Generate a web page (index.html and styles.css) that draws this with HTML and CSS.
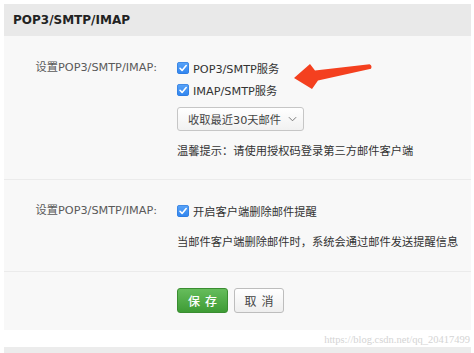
FILE: index.html
```html
<!DOCTYPE html>
<html lang="zh-CN">
<head>
<meta charset="utf-8">
<title>POP3/SMTP/IMAP</title>
<link rel="stylesheet" href="styles.css">
</head>
<body>
<div class="page">
  <div class="card">
    <div class="card-head">POP3/SMTP/IMAP</div>
    <div class="section sec1">
      <div class="label">设置POP3/SMTP/IMAP:</div>
      <div class="content">
        <label class="check"><span class="box"><svg viewBox="0 0 12 12" width="12" height="12"><path d="M3 6.3 L5.1 8.4 L9.2 3.6" fill="none" stroke="#fff" stroke-width="1.6" stroke-linecap="round" stroke-linejoin="round"/></svg></span>POP3/SMTP服务</label>
        <label class="check"><span class="box"><svg viewBox="0 0 12 12" width="12" height="12"><path d="M3 6.3 L5.1 8.4 L9.2 3.6" fill="none" stroke="#fff" stroke-width="1.6" stroke-linecap="round" stroke-linejoin="round"/></svg></span>IMAP/SMTP服务</label>
        <div class="select"><span>收取最近30天邮件</span><svg class="chev" viewBox="0 0 10 6" width="9" height="6"><path d="M1 1 L5 5 L9 1" fill="none" stroke="#777" stroke-width="1.1"/></svg></div>
        <div class="hint">温馨提示：请使用授权码登录第三方邮件客户端</div>
      </div>
    </div>
    <div class="section sec2">
      <div class="label">设置POP3/SMTP/IMAP:</div>
      <div class="content">
        <label class="check"><span class="box"><svg viewBox="0 0 12 12" width="12" height="12"><path d="M3 6.3 L5.1 8.4 L9.2 3.6" fill="none" stroke="#fff" stroke-width="1.6" stroke-linecap="round" stroke-linejoin="round"/></svg></span>开启客户端删除邮件提醒</label>
        <div class="hint">当邮件客户端删除邮件时，系统会通过邮件发送提醒信息</div>
      </div>
    </div>
    <div class="section sec3">
      <div class="label"></div>
      <div class="actions">
        <button class="btn btn-save">保存</button>
        <button class="btn btn-cancel">取消</button>
      </div>
    </div>
  </div>
  <div class="next-card"></div>
  <svg class="arrow" viewBox="0 0 474 353" width="474" height="353">
    <path d="M294 78 L310 64 L315 70.5 L369.5 64.2 Q372.5 65.5 371 68.8 L318 80.5 L312 89 Z" fill="#f4401f"/>
  </svg>
  <div class="watermark">https://blog.csdn.net/qq_20417499</div>
</div>
</body>
</html>
```
FILE: styles.css
```css
html, body {
  margin: 0;
  padding: 0;
  background: #fff;
}
body {
  font-family: "DejaVu Sans", "Noto Sans CJK SC", sans-serif;
  font-size: 11.25px;
  color: #333;
}
.page {
  position: relative;
  width: 474px;
  height: 353px;
  overflow: hidden;
  padding: 4px 3px 0 4px;
  box-sizing: border-box;
}
.card {
  background: #f8f8f8;
}
.card-head {
  height: 32px;
  line-height: 32px;
  background: #e9e9e9;
  padding-left: 9px;
  font-weight: bold;
  font-size: 12px;
  color: #222;
}
.section {
  display: grid;
  grid-template-columns: 153px 1fr;
  column-gap: 20px;
}
.sec1 {
  padding: 21px 0 16px;
}
.sec2 {
  padding: 20px 0 17px;
  border-top: 1px solid #ebebeb;
}
.sec3 {
  padding: 16px 0 17px;
  border-top: 1px solid #ebebeb;
}
.label {
  text-align: right;
  line-height: 22px;
  color: #5a5a5a;
}
.content {
  display: flex;
  flex-direction: column;
  align-items: flex-start;
}
.check {
  display: flex;
  align-items: center;
  gap: 4px;
  height: 22px;
  color: #333;
}
.box {
  width: 12px;
  height: 12px;
  border-radius: 3px;
  background: linear-gradient(#5aa4f8, #2f84ef);
  box-shadow: inset 0 0 0 0.5px #2a75d6;
  display: flex;
}
.select {
  margin-top: 6px;
  width: 127px;
  height: 24px;
  box-sizing: border-box;
  border: 1px solid #c6c6c6;
  border-radius: 3px;
  background: linear-gradient(#ffffff, #f1f1f1);
  display: flex;
  align-items: center;
  padding-left: 10px;
  gap: 7px;
  color: #444;
}
.chev {
  display: block;
}
.hint {
  margin-top: 10px;
  line-height: 22px;
  color: #333;
}
.actions {
  display: flex;
  gap: 6px;
}
.btn {
  height: 25px;
  box-sizing: border-box;
  border-radius: 3px;
  font-family: "Noto Sans CJK SC", sans-serif;
  font-size: 12px;
  letter-spacing: 5px;
  padding: 0 0 0 5px;
  cursor: pointer;
}
.btn-save {
  width: 51px;
  border: 1px solid #3a8d31;
  background: linear-gradient(#66bd5c, #3e9b35);
  color: #fff;
  font-weight: 500;
}
.btn-cancel {
  width: 50px;
  border: 1px solid #bdbdbd;
  background: linear-gradient(#ffffff, #eeeeee);
  color: #444;
}
.next-card {
  margin-top: 17px;
  height: 10px;
  background: #ececec;
}
.arrow {
  position: absolute;
  left: 0;
  top: 0;
  pointer-events: none;
}
.watermark {
  position: absolute;
  right: 4px;
  top: 334px;
  font-family: "Liberation Serif", serif;
  font-size: 10.5px;
  color: #d4d4d4;
}
```
